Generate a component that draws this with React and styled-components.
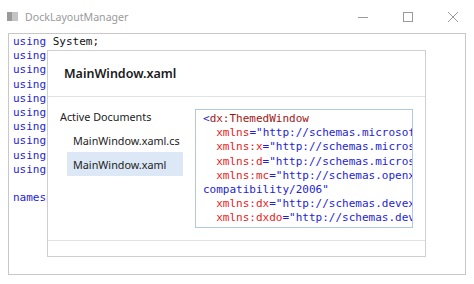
import React from 'react';
import styled, { createGlobalStyle } from 'styled-components';

const GlobalStyle = createGlobalStyle`
  html, body {
    margin: 0;
    padding: 0;
    background: #ffffff;
  }
  body {
    width: 474px;
    height: 284px;
    overflow: hidden;
  }
`;

const Window = styled.div`
  width: 474px;
  height: 284px;
  display: flex;
  flex-direction: column;
  background: #ffffff;
  font-family: "Noto Sans", "Open Sans", sans-serif;
`;

const TitleBar = styled.div`
  height: 33px;
  display: flex;
  align-items: center;
  padding-left: 7px;
  flex-shrink: 0;
`;

const TitleText = styled.div`
  margin-left: 7px;
  font-size: 10.6px;
  color: #9a9a9a;
  flex: 1;
`;

const Controls = styled.div`
  display: flex;
  align-items: center;
  gap: 35px;
  padding-right: 16px;
`;

const Body = styled.div`
  flex: 1;
  display: flex;
  padding: 0 8px 9px 8px;
`;

const Editor = styled.div`
  position: relative;
  flex: 1;
  border: 1px solid #c8c8c8;
  padding: 1px 4px;
  font-family: "DejaVu Sans Mono", "Liberation Mono", monospace;
  font-size: 11px;
`;

const CodeLine = styled.div`
  height: 14.2px;
  line-height: 14.2px;
  white-space: pre;
  color: #111111;
`;

const Kw = styled.span`
  color: ${(p) => p.color || '#1e1ed2'};
`;

const FloatPanel = styled.div`
  position: absolute;
  left: 38px;
  top: 16px;
  width: 379px;
  height: 207px;
  box-sizing: border-box;
  border: 1px solid #cfcfcf;
  background: #ffffff;
  display: flex;
  flex-direction: column;
  font-family: "Noto Sans", "Open Sans", sans-serif;
`;

const PanelHeader = styled.div`
  height: 45px;
  flex-shrink: 0;
  border-bottom: 1px solid #e2e2e2;
  display: flex;
  align-items: center;
  padding-left: 16px;
  font-size: 12.5px;
  font-weight: 600;
  color: #1a1a1a;
`;

const PanelContent = styled.div`
  flex: 1;
  display: flex;
  min-height: 0;
`;

const DocList = styled.div`
  width: 147px;
  flex-shrink: 0;
  padding: 7px 0 0 12px;
  box-sizing: border-box;
`;

const ListHeader = styled.div`
  height: 24px;
  display: flex;
  align-items: center;
  font-size: 10.8px;
  color: #222222;
`;

const DocItem = styled.div`
  width: 116px;
  height: 24px;
  margin-left: 7px;
  padding-left: 6px;
  box-sizing: border-box;
  display: flex;
  align-items: center;
  font-size: 10.8px;
  color: #222222;
  background: ${(p) => (p.selected ? '#dce8f6' : 'transparent')};
`;

const CodeBox = styled.div`
  flex: 1;
  margin: 12px 12px 12px 0;
  border: 1px solid #b5c9de;
  padding: 2px 7px 0 7px;
  overflow: hidden;
  font-family: "DejaVu Sans Mono", "Liberation Mono", monospace;
  font-size: 11px;
`;

const PanelFooter = styled.div`
  height: 15px;
  flex-shrink: 0;
  border-top: 1px solid #e2e2e2;
`;

const AppIcon = () => (
  <svg width="11" height="9" viewBox="0 0 11 9">
    <rect x="0" y="0" width="11" height="9" fill="#c4c4c4" />
    <rect x="0" y="0" width="5" height="9" fill="#9a9a9a" />
  </svg>
);

const MinIcon = () => (
  <svg width="10" height="10" viewBox="0 0 10 10">
    <line x1="0" y1="5.5" x2="10" y2="5.5" stroke="#9a9a9a" strokeWidth="1" />
  </svg>
);

const MaxIcon = () => (
  <svg width="10" height="10" viewBox="0 0 10 10">
    <rect x="0.5" y="0.5" width="9" height="9" fill="none" stroke="#9a9a9a" strokeWidth="1" />
  </svg>
);

const CloseIcon = () => (
  <svg width="10" height="10" viewBox="0 0 10 10">
    <path d="M0 0 L10 10 M10 0 L0 10" stroke="#9a9a9a" strokeWidth="1" />
  </svg>
);

const usings = ['System;', '', '', '', '', '', '', '', '', ''];

const RED = '#e31b1b';
const DARK = '#a31515';
const BLUE = '#1e1ed2';

const Attr = ({ name, value }) => (
  <CodeLine>
    {'  '}
    <Kw color={RED}>{name}</Kw>
    <Kw color={BLUE}>="{value}</Kw>
  </CodeLine>
);

const App = () => (
  <>
    <GlobalStyle />
    <Window>
      <TitleBar>
        <AppIcon />
        <TitleText>DockLayoutManager</TitleText>
        <Controls>
          <MinIcon />
          <MaxIcon />
          <CloseIcon />
        </Controls>
      </TitleBar>
      <Body>
        <Editor>
          {usings.map((u, i) => (
            <CodeLine key={i}>
              <Kw>using</Kw> {u}
            </CodeLine>
          ))}
          <CodeLine> </CodeLine>
          <CodeLine>
            <Kw>namespace</Kw> DockLayoutManagerApp
          </CodeLine>

          <FloatPanel>
            <PanelHeader>MainWindow.xaml</PanelHeader>
            <PanelContent>
              <DocList>
                <ListHeader>Active Documents</ListHeader>
                <DocItem>MainWindow.xaml.cs</DocItem>
                <DocItem selected>MainWindow.xaml</DocItem>
              </DocList>
              <CodeBox>
                <CodeLine>
                  <Kw color={BLUE}>&lt;</Kw>
                  <Kw color={DARK}>dx:ThemedWindow</Kw>
                </CodeLine>
                <Attr name="xmlns" value="http://schemas.microsof" />
                <Attr name="xmlns:x" value="http://schemas.micros" />
                <Attr name="xmlns:d" value="http://schemas.micros" />
                <Attr name="xmlns:mc" value="http://schemas.openx" />
                <CodeLine>
                  <Kw color={BLUE}>compatibility/2006"</Kw>
                </CodeLine>
                <Attr name="xmlns:dx" value="http://schemas.devex" />
                <Attr name="xmlns:dxdo" value="http://schemas.dev" />
                <CodeLine>
                  <Kw color={BLUE}>docki</Kw>
                  <Kw color={RED}>ng</Kw>
                  <Kw color={BLUE}>="d" x:Class="Dock</Kw>
                </CodeLine>
              </CodeBox>
            </PanelContent>
            <PanelFooter />
          </FloatPanel>
        </Editor>
      </Body>
    </Window>
  </>
);

export default App;
